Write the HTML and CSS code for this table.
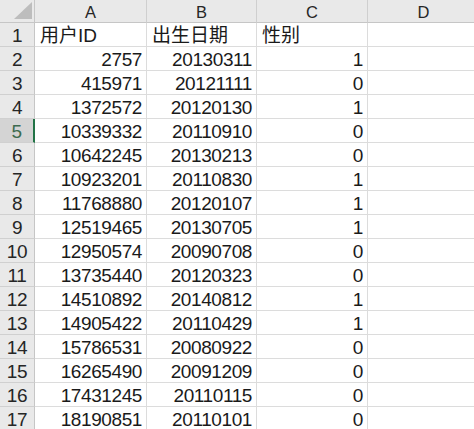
FILE: index.html
```html
<!DOCTYPE html>
<html lang="zh">
<head>
<meta charset="utf-8">
<title>Sheet</title>
<link rel="stylesheet" href="styles.css">
</head>
<body>
<div class="sheet">
  <div class="corner"><span class="tri"></span></div>
  <div class="ch">A</div><div class="ch">B</div><div class="ch">C</div><div class="ch">D</div>

  <div class="rh">1</div><div class="c t">用户ID</div><div class="c t">出生日期</div><div class="c t">性别</div><div class="c"></div>
  <div class="rh">2</div><div class="c n">2757</div><div class="c n">20130311</div><div class="c n">1</div><div class="c"></div>
  <div class="rh">3</div><div class="c n">415971</div><div class="c n">20121111</div><div class="c n">0</div><div class="c"></div>
  <div class="rh">4</div><div class="c n">1372572</div><div class="c n">20120130</div><div class="c n">1</div><div class="c"></div>
  <div class="rh sel">5</div><div class="c n">10339332</div><div class="c n">20110910</div><div class="c n">0</div><div class="c"></div>
  <div class="rh">6</div><div class="c n">10642245</div><div class="c n">20130213</div><div class="c n">0</div><div class="c"></div>
  <div class="rh">7</div><div class="c n">10923201</div><div class="c n">20110830</div><div class="c n">1</div><div class="c"></div>
  <div class="rh">8</div><div class="c n">11768880</div><div class="c n">20120107</div><div class="c n">1</div><div class="c"></div>
  <div class="rh">9</div><div class="c n">12519465</div><div class="c n">20130705</div><div class="c n">1</div><div class="c"></div>
  <div class="rh">10</div><div class="c n">12950574</div><div class="c n">20090708</div><div class="c n">0</div><div class="c"></div>
  <div class="rh">11</div><div class="c n">13735440</div><div class="c n">20120323</div><div class="c n">0</div><div class="c"></div>
  <div class="rh">12</div><div class="c n">14510892</div><div class="c n">20140812</div><div class="c n">1</div><div class="c"></div>
  <div class="rh">13</div><div class="c n">14905422</div><div class="c n">20110429</div><div class="c n">1</div><div class="c"></div>
  <div class="rh">14</div><div class="c n">15786531</div><div class="c n">20080922</div><div class="c n">0</div><div class="c"></div>
  <div class="rh">15</div><div class="c n">16265490</div><div class="c n">20091209</div><div class="c n">0</div><div class="c"></div>
  <div class="rh">16</div><div class="c n">17431245</div><div class="c n">20110115</div><div class="c n">0</div><div class="c"></div>
  <div class="rh">17</div><div class="c n">18190851</div><div class="c n">20110101</div><div class="c n">0</div><div class="c"></div>
</div>
</body>
</html>
```
FILE: styles.css
```css
html, body {
  margin: 0;
  padding: 0;
  background: #ffffff;
  overflow: hidden;
}
.sheet {
  display: grid;
  grid-template-columns: 35px 112px 110px 111px 112px;
  grid-template-rows: 23px repeat(17, 24px);
  font-family: "Liberation Sans", "Noto Sans CJK SC", sans-serif;
  color: #1a1a1a;
}
.corner {
  position: relative;
  background: #e9e9e9;
  border-right: 1px solid #c6c6c6;
  border-bottom: 1px solid #c6c6c6;
}
.tri {
  position: absolute;
  right: 2px;
  bottom: 3px;
  width: 18px;
  height: 17px;
  background: #bdbdbd;
  clip-path: polygon(100% 0, 100% 100%, 0 100%);
}
.ch {
  background: #e9e9e9;
  border-right: 1px solid #cfcfcf;
  border-bottom: 1px solid #c6c6c6;
  text-align: center;
  font-size: 16.5px;
  line-height: 22px;
  padding-top: 1px;
  box-sizing: border-box;
  color: #262626;
}
.rh {
  background: #e9e9e9;
  border-right: 1px solid #c6c6c6;
  border-bottom: 1px solid #d0d0d0;
  text-align: center;
  font-size: 19px;
  letter-spacing: -0.4px;
  line-height: 23px;
  padding-top: 1px;
  box-sizing: border-box;
  color: #262626;
}
.rh.sel {
  background: #d4d4d4;
  color: #3d6b50;
  border-right: 2px solid #217346;
}
.c {
  border-right: 1px solid #dcdcdc;
  border-bottom: 1px solid #dcdcdc;
  font-size: 19px;
  line-height: 23px;
  padding-top: 1px;
  box-sizing: border-box;
  white-space: nowrap;
  overflow: hidden;
}
.n {
  text-align: right;
  padding-right: 4px;
  letter-spacing: -0.4px;
}
.t {
  text-align: left;
  padding-left: 5px;
}
```
